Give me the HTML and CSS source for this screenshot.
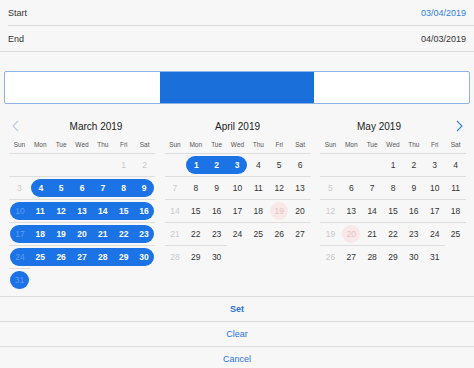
FILE: index.html
```html
<!DOCTYPE html>
<html lang="en">
	<head>
		<meta charset="UTF-8" />
		<title>Date Range</title>
		<link rel="stylesheet" href="styles.css">
	</head>
	<body>
		<div class="fields">
			<div class="field first">
				<span>Start</span>
				<span class="value active">03/04/2019</span>
			</div>
			<div class="field">
				<span>End</span>
				<span class="value">04/03/2019</span>
			</div>
		</div>

		<div class="segments">
			<div class="segment"></div>
			<div class="segment on"></div>
			<div class="segment"></div>
		</div>

		<div class="months" id="months"></div>

		<div class="actions">
			<div class="action bold">Set</div>
			<div class="action">Clear</div>
			<div class="action">Cancel</div>
		</div>

		<script>
			const meses = [
				{ nome: "March 2019", ano: 2019, mes: 2, nav: "prev" },
				{ nome: "April 2019", ano: 2019, mes: 3 },
				{ nome: "May 2019", ano: 2019, mes: 4, nav: "next" }
			];
			const semana = ["Sun", "Mon", "Tue", "Wed", "Thu", "Fri", "Sat"];
			const inicio = new Date(2019, 2, 4);
			const fim = new Date(2019, 3, 3);
			const minimo = new Date(2019, 2, 3);
			const feriados = ["2019-3-19", "2019-4-20"];

			function seta(tipo) {
				const d = tipo === "prev" ? "M6 1 L1 6 L6 11" : "M1 1 L6 6 L1 11";
				return `<span class="nav ${tipo}"><svg width="7" height="12" viewBox="0 0 7 12"><path d="${d}" fill="none" stroke="currentColor" stroke-width="1.1"/></svg></span>`;
			}

			function montarMes(info) {
				const box = document.createElement("div");
				box.className = "month";

				let head = '<div class="month-head">';
				if (info.nav === "prev") head += seta("prev");
				head += `<span class="title">${info.nome}</span>`;
				if (info.nav === "next") head += seta("next");
				head += "</div>";

				let grid = '<div class="grid">';
				for (let i = 0; i < 7; i++) {
					grid += `<div class="wd">${semana[i]}</div>`;
				}

				const primeiro = new Date(info.ano, info.mes, 1).getDay();
				const total = new Date(info.ano, info.mes + 1, 0).getDate();
				for (let i = 0; i < primeiro; i++) {
					grid += '<div class="cell"></div>';
				}
				for (let dia = 1; dia <= total; dia++) {
					const data = new Date(info.ano, info.mes, dia);
					const dow = data.getDay();
					const cls = ["day"];
					if (data >= inicio && data <= fim) {
						cls.push("sel");
						if (+data === +inicio || dow === 0 || dia === 1) cls.push("left");
						if (+data === +fim || dow === 6 || dia === total) cls.push("right");
					}
					if (dow === 0 || data < minimo) cls.push("off");
					if (feriados.includes(`${info.ano}-${info.mes}-${dia}`)) cls.push("holiday");
					grid += `<div class="cell"><span class="${cls.join(" ")}">${dia}</span></div>`;
				}
				grid += "</div>";

				box.innerHTML = head + grid;
				return box;
			}

			const alvo = document.getElementById("months");
			for (let i = 0; i < meses.length; i++) {
				alvo.appendChild(montarMes(meses[i]));
			}
		</script>
	</body>
</html>
```

FILE: styles.css
```css
body {
	margin: 0;
	background: #f7f7f7;
	font-family: "Liberation Sans", Arial, sans-serif;
	color: #333;
}

.field {
	display: flex;
	justify-content: space-between;
	align-items: center;
	height: 25px;
	padding: 0 8px;
	font-size: 9px;
	border-bottom: 1px solid #dcdcdc;
}

.field.first {
	margin-left: 8px;
	padding-left: 0;
}

.value.active {
	color: #2f7fe0;
}

.segments {
	display: flex;
	height: 31px;
	margin: 19px 4px 0;
	border: 1px solid #8db3e6;
	border-radius: 2px;
	background: #fff;
}

.segment {
	flex: 1;
}

.segment.on {
	background: #1a6fdb;
}

.months {
	display: grid;
	grid-template-columns: repeat(3, 1fr);
	column-gap: 9.5px;
	padding: 0 8px 0 9px;
	margin-top: 11px;
	height: 181px;
}

.month-head {
	display: flex;
	align-items: center;
	height: 22px;
}

.title {
	flex: 1;
	text-align: center;
	font-size: 10px;
	color: #222;
}

.nav {
	display: flex;
	width: 28px;
	height: 22px;
	align-items: center;
}

.nav.prev {
	color: #b3cbea;
	padding-left: 3px;
	box-sizing: border-box;
}

.nav.next {
	color: #2f7fe0;
	justify-content: flex-end;
	padding-right: 3px;
	box-sizing: border-box;
}

.grid {
	display: grid;
	grid-template-columns: repeat(7, 1fr);
}

.wd {
	height: 16px;
	line-height: 16px;
	text-align: center;
	font-size: 6.5px;
	color: #555;
}

.cell {
	display: flex;
	height: 22px;
	border-top: 1px solid #dedede;
}

.day {
	flex: 1;
	display: flex;
	align-items: center;
	justify-content: center;
	height: 18px;
	margin: 2px 0;
	font-size: 8.5px;
	color: #333;
}

.day.off {
	color: #c9c9c9;
}

.day.sel {
	background: #1b73e6;
	color: #fff;
	font-weight: bold;
}

.day.sel.off {
	color: rgba(255, 255, 255, 0.3);
	font-weight: normal;
}

.day.left {
	margin-left: 1px;
	border-top-left-radius: 9px;
	border-bottom-left-radius: 9px;
}

.day.right {
	margin-right: 1px;
	border-top-right-radius: 9px;
	border-bottom-right-radius: 9px;
}

.day.holiday {
	flex: 0 0 18px;
	margin: 2px auto;
	border-radius: 50%;
	background: #f9e8e8;
	color: #e6c3c3;
}

.action {
	height: 24px;
	line-height: 24px;
	text-align: center;
	font-size: 9px;
	color: #2b72d6;
	border-top: 1px solid #dcdcdc;
}

.action.bold {
	font-weight: bold;
}
```
